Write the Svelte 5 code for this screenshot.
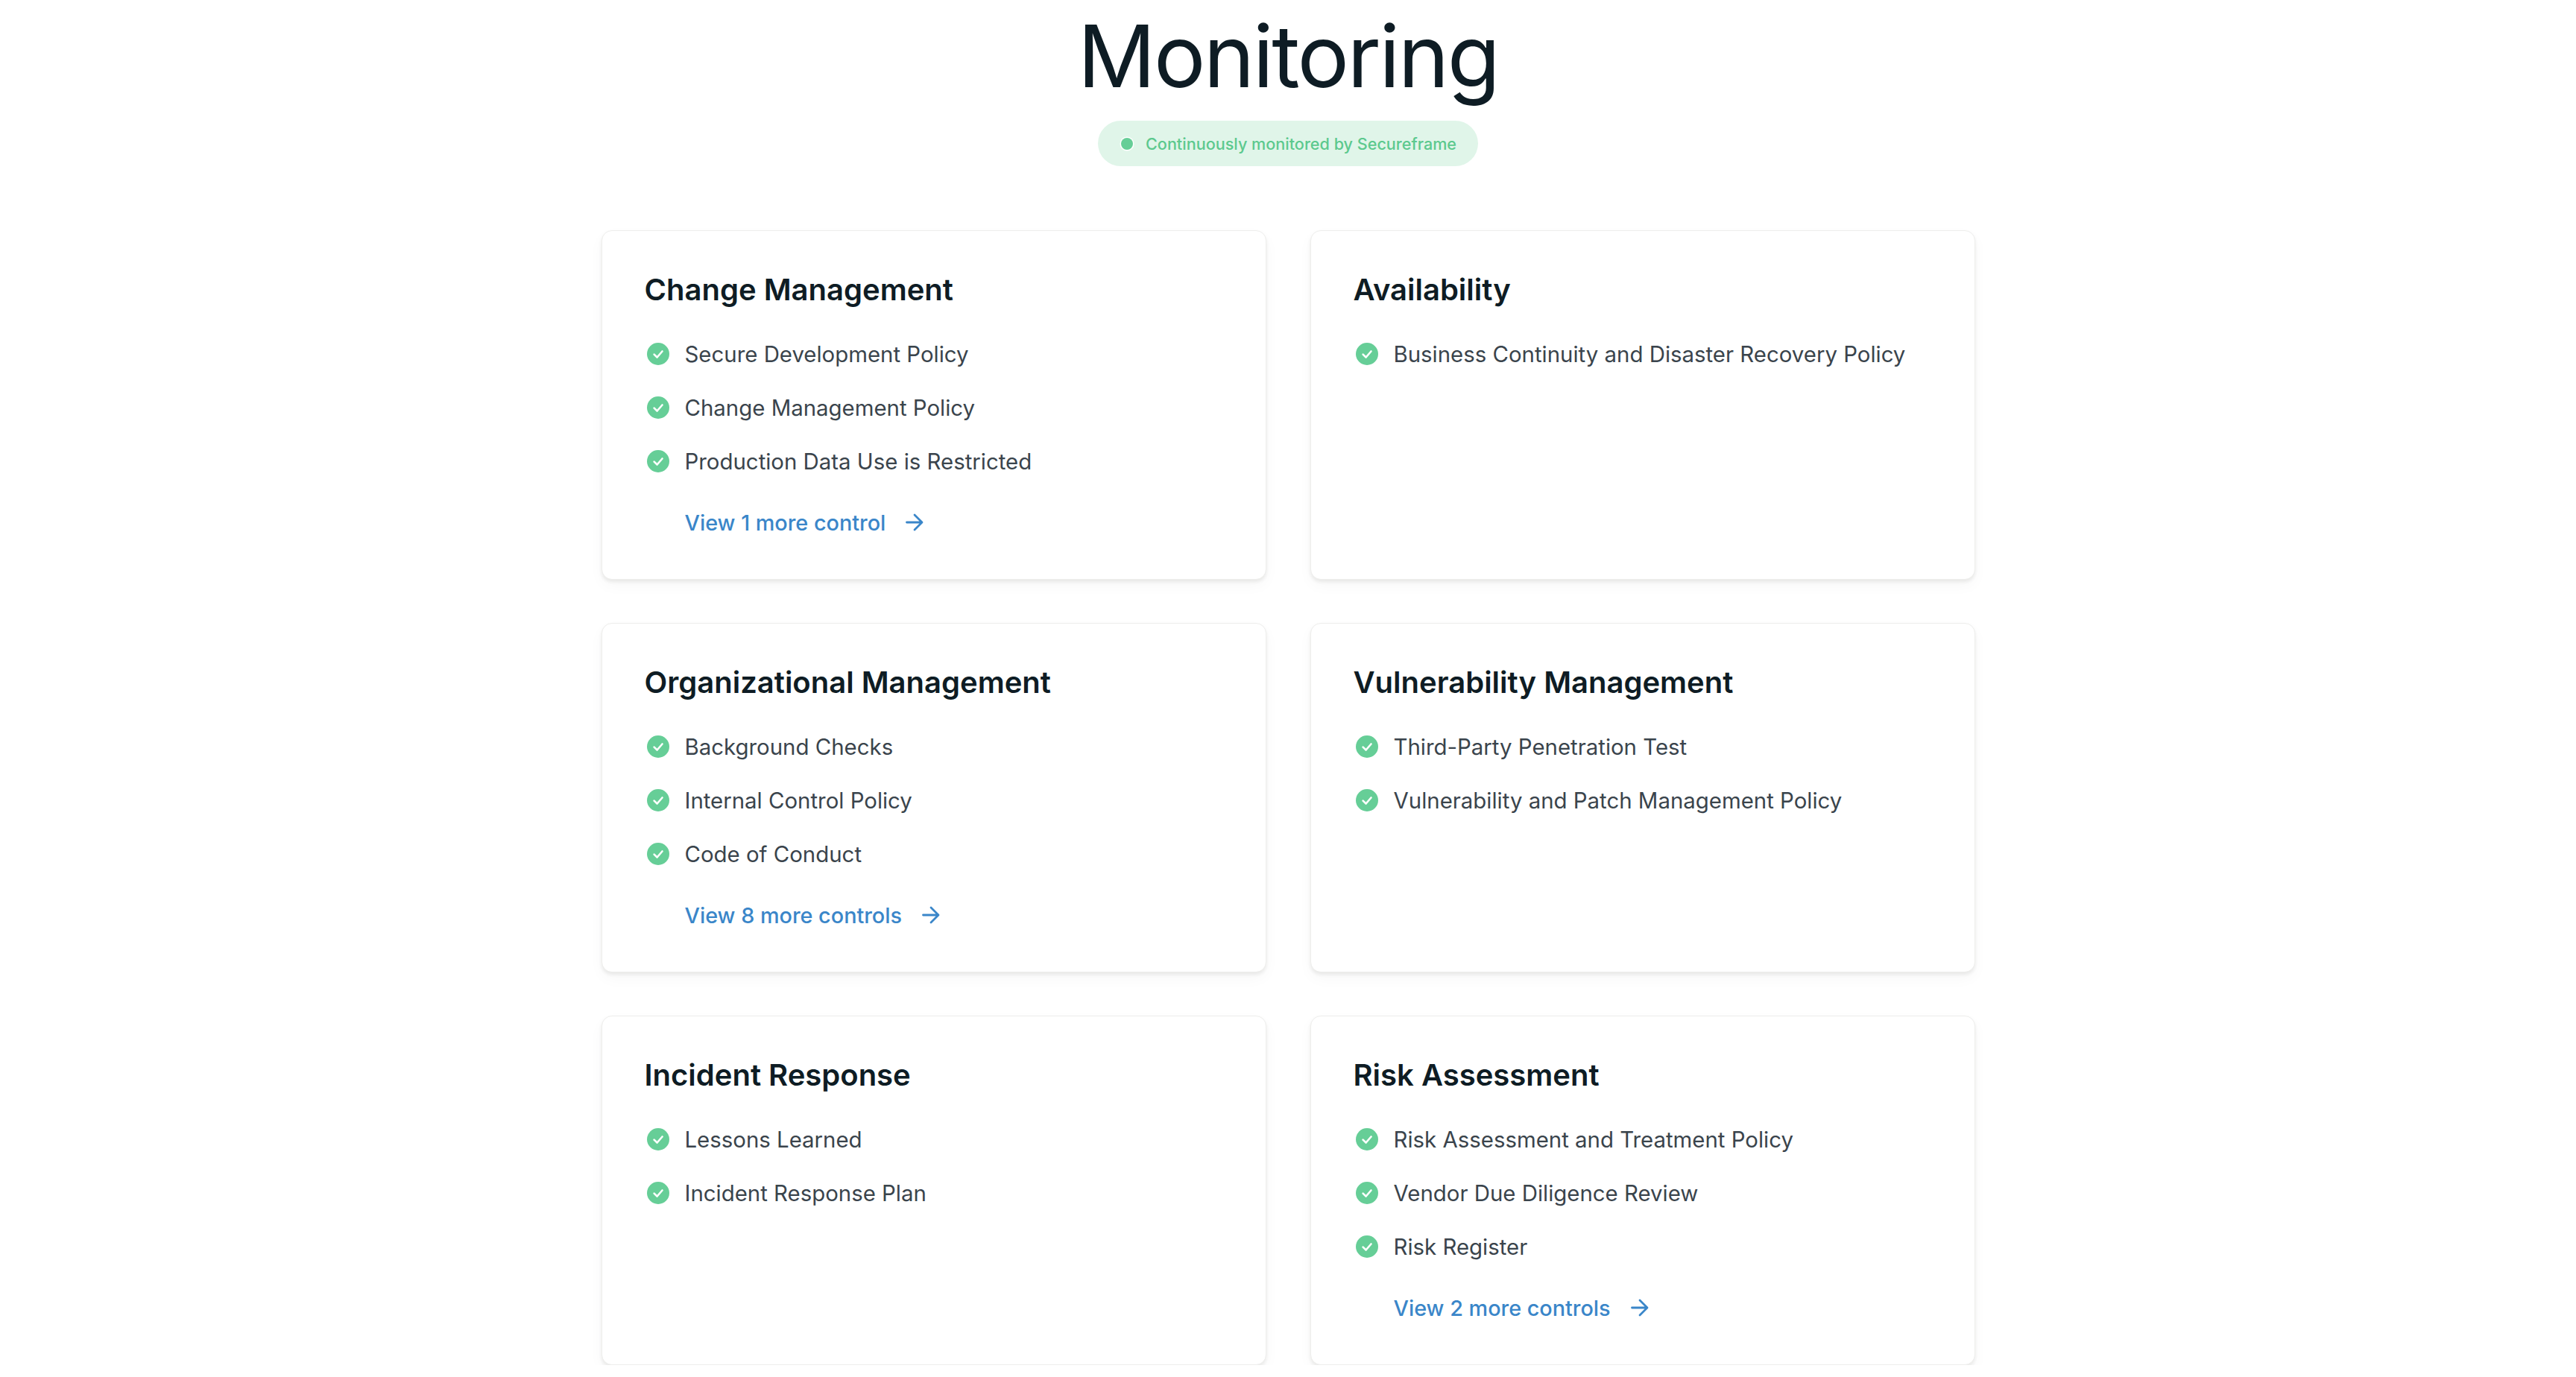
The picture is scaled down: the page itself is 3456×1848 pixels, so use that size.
<script>
  // Monitoring overview cards
  const sections = [
    { title: 'Change Management', controls: ['Secure Development Policy', 'Change Management Policy', 'Production Data Use is Restricted'], more: 'View 1 more control' },
    { title: 'Availability', controls: ['Business Continuity and Disaster Recovery Policy'] },
    { title: 'Organizational Management', controls: ['Background Checks', 'Internal Control Policy', 'Code of Conduct'], more: 'View 8 more controls' },
    { title: 'Vulnerability Management', controls: ['Third-Party Penetration Test', 'Vulnerability and Patch Management Policy'] },
    { title: 'Incident Response', controls: ['Lessons Learned', 'Incident Response Plan'] },
    { title: 'Risk Assessment', controls: ['Risk Assessment and Treatment Policy', 'Vendor Due Diligence Review', 'Risk Register'], more: 'View 2 more controls' },
  ];
</script>

<main class="page">
  <h1>Monitoring</h1>
  <div class="status">
    <span class="dot"></span>
    Continuously monitored by Secureframe
  </div>

  <section class="grid">
    {#each sections as section}
      <article class="card">
        <h2>{section.title}</h2>
        <ul>
          {#each section.controls as control}
            <li>
              <svg class="check" width="30" height="30" viewBox="0 0 30 30">
                <circle cx="15" cy="15" r="15" fill="#66ce97" />
                <path d="M9.6 15.6l4 3.9 6.9-8" fill="none" stroke="#fff" stroke-width="2.6" stroke-linecap="round" stroke-linejoin="round" />
              </svg>
              {control}
            </li>
          {/each}
        </ul>
        {#if section.more}
          <a class="more" href="#top">
            {section.more}
            <svg width="24" height="24" viewBox="0 0 24 24" fill="none">
              <path d="M1.5 12h20M12 2l10 10-10 10" stroke="currentColor" stroke-width="2.8" stroke-linecap="round" stroke-linejoin="round" />
            </svg>
          </a>
        {/if}
      </article>
    {/each}
  </section>
</main>

<style>
  :global(body) {
    background: #fff;
    font-family: Inter, "Liberation Sans", sans-serif;
  }

  .page {
    display: flex;
    flex-direction: column;
    align-items: center;
    padding-top: 4px;
  }

  h1 {
    margin: 0;
    font-size: 116px;
    font-weight: 400;
    line-height: 142px;
    letter-spacing: -2.6px;
    color: #0e1c24;
  }

  .status {
    display: flex;
    align-items: center;
    gap: 17px;
    width: 510px;
    box-sizing: border-box;
    height: 61px;
    margin-top: 16px;
    padding: 0 30px 0 31px;
    border-radius: 31px;
    background: #e0f5e9;
    color: #5cc98e;
    font-size: 21.6px;
    font-weight: 500;
    white-space: nowrap;
  }

  .dot {
    flex: none;
    width: 16px;
    height: 16px;
    border-radius: 50%;
    background: #66ce97;
    box-shadow: 0 0 0 1.5px #fff;
  }

  .grid {
    display: grid;
    grid-template-columns: 892px 892px;
    grid-auto-rows: 469px;
    gap: 58px 59px;
    margin-top: 86px;
  }

  .card {
    box-sizing: border-box;
    padding: 51px 57px 0 57px;
    border: 1.5px solid #eeeeec;
    border-radius: 14px;
    background: #fff;
    box-shadow: 0 3px 4px rgba(40, 40, 30, 0.08), 0 8px 20px rgba(40, 40, 30, 0.03);
  }

  h2 {
    margin: 0;
    font-size: 40px;
    font-weight: 600;
    line-height: 56px;
    color: #0e1c24;
  }

  ul {
    display: flex;
    flex-direction: column;
    gap: 30px;
    margin: 37px 0 0;
    padding: 0;
    list-style: none;
  }

  li {
    display: flex;
    align-items: center;
    gap: 21px;
    height: 42px;
    padding-left: 3px;
    font-size: 29.4px;
    color: #3a444c;
  }

  .check {
    flex: none;
  }

  .more {
    display: flex;
    align-items: center;
    gap: 27px;
    height: 42px;
    margin: 40px 0 0 54px;
    font-size: 28.8px;
    font-weight: 500;
    color: #3a86c9;
    text-decoration: none;
  }
</style>
